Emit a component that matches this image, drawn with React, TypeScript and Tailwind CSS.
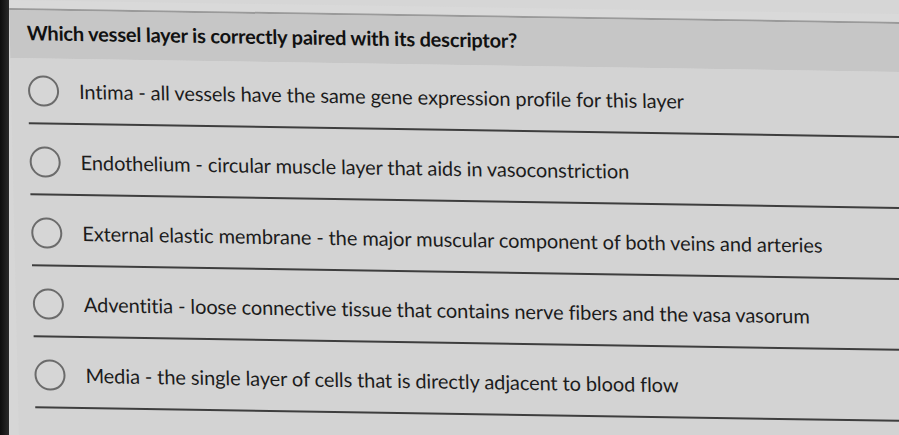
import React from "react";

const options = [
  "Intima - all vessels have the same gene expression profile for this layer",
  "Endothelium - circular muscle layer that aids in vasoconstriction",
  "External elastic membrane - the major muscular component of both veins and arteries",
  "Adventitia - loose connective tissue that contains nerve fibers and the vasa vasorum",
  "Media - the single layer of cells that is directly adjacent to blood flow",
];

const App = () => {
  return (
    <div className="w-[899px] h-[435px] overflow-hidden flex bg-[#d6d6d6] font-['Lato','Liberation_Sans',sans-serif] [font-variant-ligatures:none]">
      <div className="w-[9px] shrink-0 bg-gradient-to-r from-[#0d0d0d] to-[#2a2a2a]" />
      <div className="flex-1 min-w-0 relative">
        <div className="w-[930px] h-[470px] flex flex-col origin-top-left skew-x-[1.3deg] skew-y-[0.9deg]">
          <div className="h-[10px] bg-[#d9d9d9] border-b-2 border-[#9a9a9a]" />
          <div className="h-[48px] bg-[#c6c6c6] flex items-center pl-[17px] pb-[5px]">
            <h1 className="text-[20px] font-bold text-[#111] tracking-[-0.2px]">
              Which vessel layer is correctly paired with its descriptor?
            </h1>
          </div>
          <div className="flex-1 bg-[#d3d3d3] pl-[17px] pt-[16px]">
            {options.map((text, i) => (
              <div key={i} className={i === 0 ? "" : "mt-[21px]"}>
                <label className="flex items-center h-[32px]">
                  <span className="w-[31px] h-[31px] rounded-full border-2 border-[#6b6b6b] bg-[#d6d6d6] shrink-0" />
                  <span className="ml-[20px] text-[20px] text-[#1c1c1c] whitespace-nowrap tracking-[-0.1px]">
                    {text}
                  </span>
                </label>
                <div className="mt-[16px] h-[2px] bg-[#3e3e3e]" />
              </div>
            ))}
          </div>
        </div>
      </div>
    </div>
  );
};

export default App;
